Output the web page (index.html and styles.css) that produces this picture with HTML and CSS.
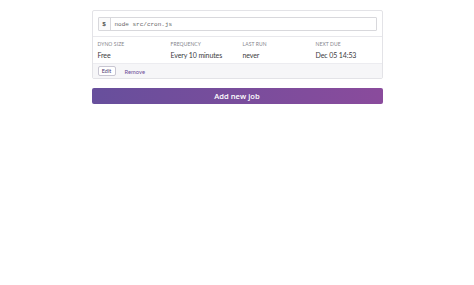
FILE: index.html
```html
<!DOCTYPE html>
<html>
<head>
<meta charset="utf-8">
<link rel="stylesheet" href="styles.css">
</head>
<body>
<div class="wrap">
  <div class="card">
    <div class="cmd-area">
      <div class="cmd">
        <span class="prompt">$</span>
        <span class="cmd-text">node src/cron.js</span>
      </div>
    </div>
    <div class="info">
      <div class="col"><div class="label">Dyno size</div><div class="value">Free</div></div>
      <div class="col"><div class="label">Frequency</div><div class="value">Every 10 minutes</div></div>
      <div class="col"><div class="label">Last run</div><div class="value">never</div></div>
      <div class="col"><div class="label">Next due</div><div class="value">Dec 05 14:53</div></div>
    </div>
    <div class="footer">
      <span class="edit">Edit</span>
      <span class="remove">Remove</span>
    </div>
  </div>
  <div class="add">Add new job</div>
</div>
</body>
</html>
```
FILE: styles.css
```css
html, body { margin: 0; padding: 0; background: #fff; }
body { font-family: Lato, "Open Sans", sans-serif; font-weight: 400; color: #3f3f44; }
.wrap { width: 291px; margin: 10px auto 0; }
.card { border: 1px solid #e3e3e7; border-radius: 2px; box-sizing: border-box; }
.cmd-area { padding: 6px 5px 5px; border-bottom: 1px solid #e8e8ec; }
.cmd { display: flex; height: 14px; border: 1px solid #d8d8dc; box-sizing: border-box; border-radius: 1px; align-items: stretch; }
.prompt { width: 11px; border-right: 1px solid #d8d8dc; background: #fafafa; font-family: "Liberation Mono", monospace; font-size: 6px; font-weight: bold; color: #444; display: flex; align-items: center; justify-content: center; }
.cmd-text { padding-left: 4px; font-family: "Liberation Mono", monospace; font-size: 6px; color: #666; display: flex; align-items: center; }
.info { display: grid; grid-template-columns: 73px 72px 73px 1fr; padding: 4px 0 3px 5px; }
.label { font-size: 5px; text-transform: uppercase; color: #85858c; letter-spacing: 0.1px; line-height: 7px; }
.value { font-family: Lato, sans-serif; font-size: 7px; font-weight: 400; color: #3a3a40; margin-top: 3px; line-height: 9px; letter-spacing: -0.1px; }
.footer { background: #f6f6f8; border-top: 1px solid #ececf0; height: 14px; display: flex; align-items: center; padding-left: 5px; }
.edit { font-size: 5.5px; color: #4a3a70; border: 1px solid #c8c6d2; background: #fff; border-radius: 2px; height: 10px; box-sizing: border-box; width: 18px; display: flex; align-items: center; justify-content: center; }
.remove { font-size: 5.8px; color: #6f4f98; margin-left: 9px; }
.add { margin-top: 9px; height: 16px; border-radius: 2px; background: linear-gradient(90deg, #674f9c, #8a4b9c); color: #fff; font-family: "Open Sans", sans-serif; font-size: 7.6px; font-weight: 600; display: flex; align-items: center; justify-content: center; }
```
